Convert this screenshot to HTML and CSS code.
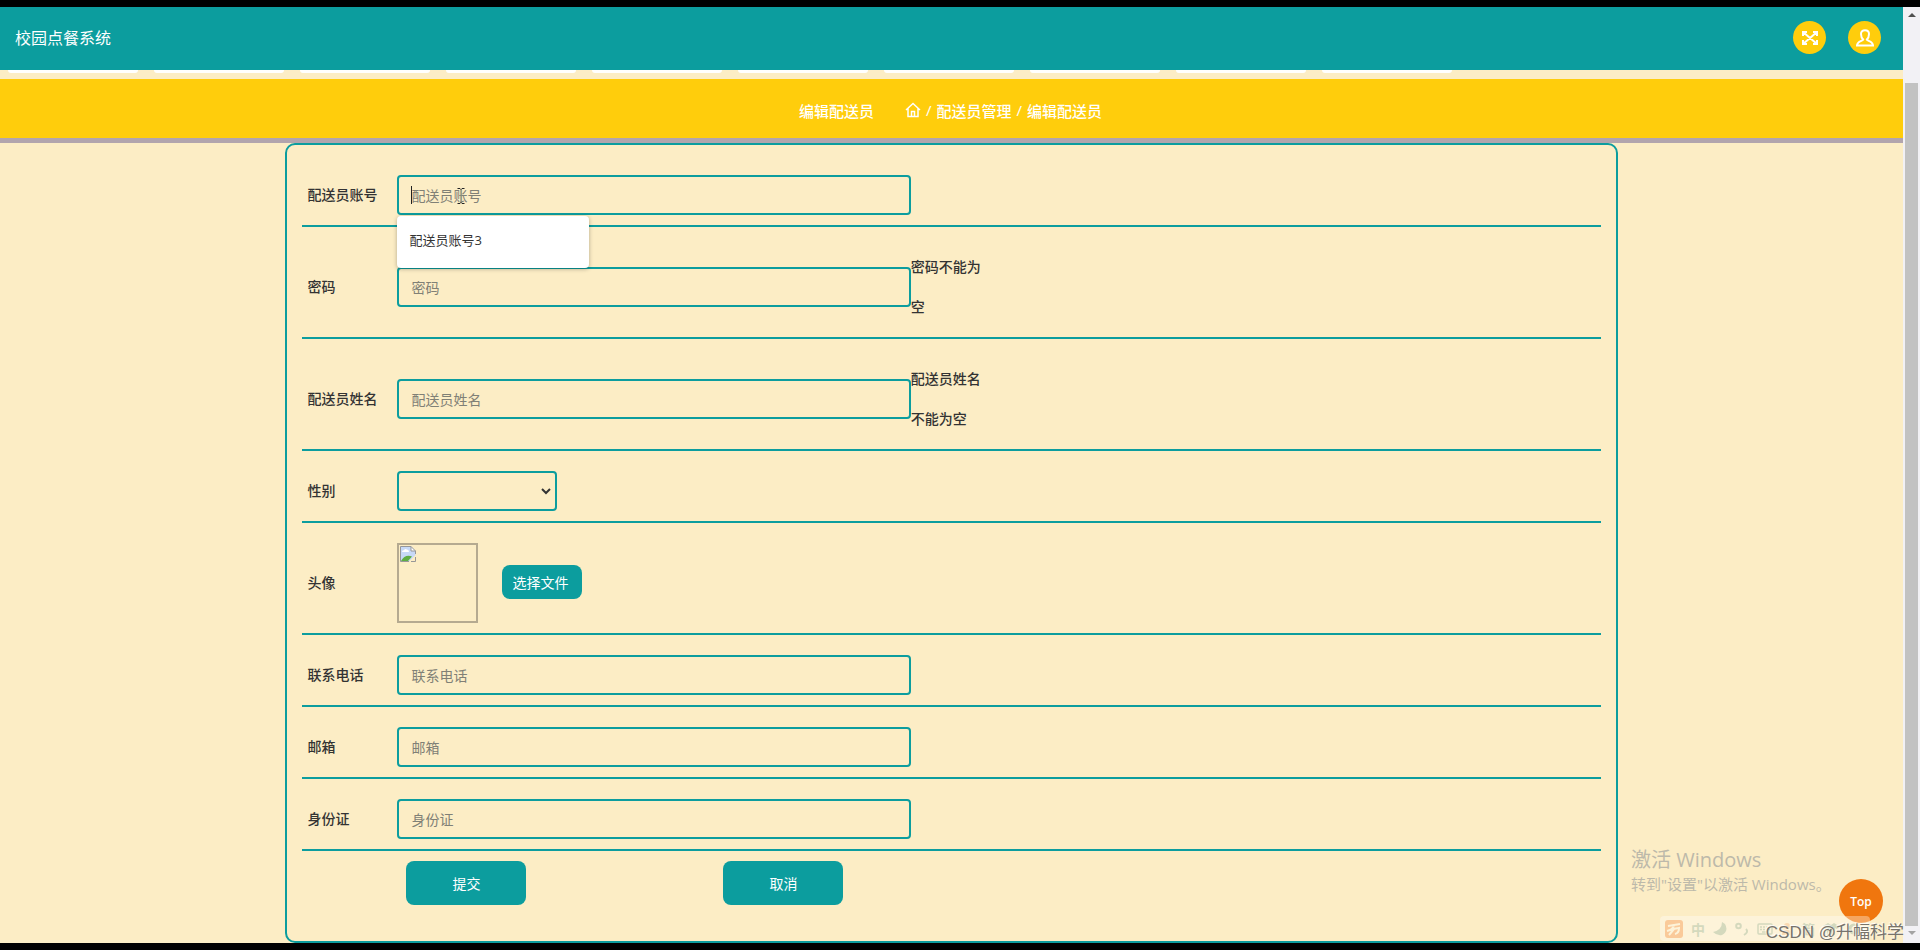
FILE: index.html
```html
<!DOCTYPE html>
<html lang="zh-CN">
<head>
    <meta charset="UTF-8">
    <meta name="viewport" content="width=device-width, initial-scale=1.0">
    <title>校园点餐系统</title>
    <link rel="stylesheet" href="styles.css">
</head>
<body>
    <div class="page">
        <header class="navbar">
            <span class="navbar-title">校园点餐系统</span>
            <div class="navbar-actions">
                <button type="button" class="round-button" aria-label="全屏">
                    <svg width="18" height="16" viewBox="0 0 18 16" fill="none" stroke="currentColor" stroke-width="2">
                        <path d="M2 6V2H6M12 2H16V6M16 10V14H12M6 14H2V10M2 2L16 14M16 2L2 14"/>
                    </svg>
                </button>
                <button type="button" class="round-button" aria-label="用户">
                    <svg width="18" height="18" viewBox="0 0 18 18" fill="none" stroke="currentColor" stroke-width="2">
                        <path d="M7.200 10.500C5.500 9 5 7 5 5C5 2.500 6.500 1.200 9 1.200S13 2.500 13 5C13 7 12.500 9 10.800 10.500C11 12 17 12 17 16.500H1C1 12 7 12 7.200 10.500Z"/>
                    </svg>
                </button>
            </div>
        </header>

        <div class="menu-tabs">
            <span></span><span></span><span></span><span></span><span></span>
            <span></span><span></span><span></span><span></span><span></span>
        </div>

        <nav class="breadcrumb">
            <span class="breadcrumb-title">编辑配送员</span>
            <a href="#" class="home-link" aria-label="首页">
                <svg width="16" height="16" viewBox="0 0 16 16" fill="none" stroke="currentColor" stroke-width="1.500">
                    <path d="M1 8L8 1.500L15 8M3 6.500V14.500H13V6.500M6.500 14.500V9.500H9.500V14.500"/>
                </svg>
            </a>
            <span>/</span>
            <span>配送员管理</span>
            <span>/</span>
            <span>编辑配送员</span>
        </nav>

        <form class="panel">
            <div class="form-row">
                <label for="account">配送员账号</label>
                <div class="field">
                    <input type="text" id="account" placeholder="配送员账号" autocomplete="off">
                    <span class="caret"></span>
                    <svg class="ibeam" width="8" height="16" viewBox="0 0 8 16" fill="none">
                        <path d="M4 1.500V14.500" stroke="#8f9a80"/>
                        <path d="M0.500 0.500H3L4 1.500L5 0.500H7.500M0.500 15.500H3L4 14.500L5 15.500H7.500" stroke="#222"/>
                    </svg>
                    <div class="suggestions">配送员账号3</div>
                </div>
            </div>
            <div class="form-row">
                <label for="password">密码</label>
                <div class="field"><input type="text" id="password" placeholder="密码"></div>
                <span class="error">密码不能为空</span>
            </div>
            <div class="form-row">
                <label for="name">配送员姓名</label>
                <div class="field"><input type="text" id="name" placeholder="配送员姓名"></div>
                <span class="error">配送员姓名不能为空</span>
            </div>
            <div class="form-row">
                <label for="gender">性别</label>
                <div class="select-wrap">
                    <select id="gender">
                        <option value=""></option>
                        <option>男</option>
                        <option>女</option>
                    </select>
                    <svg width="10" height="7" viewBox="0 0 10 7" fill="none" stroke="#333" stroke-width="2">
                        <path d="M1 1L5 5L9 1"/>
                    </svg>
                </div>
            </div>
            <div class="form-row">
                <label for="avatar">头像</label>
                <div class="avatar">
                    <svg width="16" height="16" viewBox="0 0 16 16">
                        <path d="M0.500 0.500H11L15.500 5V9L9 15.500H0.500Z" fill="#c7d9f7"/>
                        <path d="M2 6Q2 4 4 4.300Q5 2 7 3.500Q9 3.500 9 6Z" fill="#fff"/>
                        <path d="M1 15Q5 8 12 10.500L8 15Z" fill="#5fae43"/>
                        <path d="M11 0.500V5H15.500Z" fill="#fff"/>
                        <path d="M9 15.500H0.500V0.500H11L15.500 5V8M11 0.500V5H15.500M15.500 11V15.500H11" fill="none" stroke="#979797"/>
                    </svg>
                </div>
                <button type="button" id="avatar" class="upload-button">选择文件</button>
            </div>
            <div class="form-row">
                <label for="phone">联系电话</label>
                <div class="field"><input type="text" id="phone" placeholder="联系电话"></div>
            </div>
            <div class="form-row">
                <label for="email">邮箱</label>
                <div class="field"><input type="text" id="email" placeholder="邮箱"></div>
            </div>
            <div class="form-row">
                <label for="idcard">身份证</label>
                <div class="field"><input type="text" id="idcard" placeholder="身份证"></div>
            </div>
            <div class="form-actions">
                <button type="submit">提交</button>
                <button type="button">取消</button>
            </div>
        </form>
    </div>

    <div class="scrollbar">
        <span class="arrow-up"></span>
        <span class="thumb"></span>
        <span class="arrow-down"></span>
    </div>

    <div class="activate">
        <div class="activate-title">激活 Windows</div>
        <div>转到"设置"以激活 Windows。</div>
    </div>
    <button type="button" class="top-button">Top</button>
    <div class="ime-bar">
        <svg width="18" height="18" viewBox="0 0 18 18">
            <rect width="18" height="18" rx="3" fill="#f98a4b"/>
            <path d="M3 6L15 4M2 11Q7 10 9 6M8 9L14 8Q14 13 10 14M4 15L9 9" fill="none" stroke="#fff" stroke-width="2"/>
        </svg>
        <span>中</span>
        <svg width="14" height="14" viewBox="0 0 14 14">
            <path d="M9 0Q9 8 0 10Q4 14 9 13Q16 9 12 2Z" fill="#8db5b0"/>
        </svg>
        <svg width="14" height="14" viewBox="0 0 14 14" fill="none" stroke="#8db5b0" stroke-width="2">
            <circle cx="3.500" cy="4" r="2.300"/>
            <path d="M11 7Q14 10 9 13"/>
        </svg>
        <svg width="16" height="12" viewBox="0 0 16 12" fill="none" stroke="#8db5b0" stroke-width="1.500">
            <rect x="1" y="1" width="14" height="10" rx="1"/>
            <path d="M3 4H13M3 6.500H13" stroke-dasharray="2 1"/>
            <path d="M5 9H11"/>
        </svg>
        <svg width="12" height="14" viewBox="0 0 12 14" fill="#f5b58c">
            <circle cx="6" cy="4" r="3"/>
            <path d="M1 13Q1 8 6 8T11 13Z"/>
        </svg>
        <span>简</span>
        <svg width="16" height="14" viewBox="0 0 16 14" fill="#8db5b0">
            <path d="M5 1L0 4L2 7L4 6V13H12V6L14 7L16 4L11 1L8 3Z"/>
        </svg>
        <svg width="14" height="14" viewBox="0 0 14 14" fill="none" stroke="#8db5b0" stroke-width="3">
            <circle cx="7" cy="7" r="4"/>
        </svg>
    </div>
    <div class="watermark">CSDN @升幅科学</div>
</body>
</html>
```

FILE: styles.css
```css
* {
    box-sizing: border-box;
}

body {
    position: relative;
    margin: 0;
    min-height: 100vh;
    border: solid #000;
    border-width: 7px 0;
    display: flex;
    background-color: #fcedc5;
    color: #333;
    font-family: "Open Sans", "Noto Sans CJK SC", sans-serif;
    font-size: 14px;
    overflow: hidden;
}

button,
input,
select {
    font-family: inherit;
    font-size: 14px;
}

button {
    padding: 0;
    border: none;
    color: #fff;
    cursor: pointer;
}

.page {
    flex: 1;
    min-width: 0;
}

.navbar {
    height: 63px;
    padding: 0 22px 2px 15px;
    display: flex;
    justify-content: space-between;
    align-items: center;
    background-color: #0c9d9e;
    color: #fff;
}

.navbar-title {
    font-size: 16px;
    line-height: 24px;
}

.navbar-actions {
    display: flex;
    gap: 22px;
}

.round-button {
    width: 33px;
    height: 33px;
    border-radius: 50%;
    display: flex;
    align-items: center;
    justify-content: center;
    background-color: #ffcd0c;
}

/* Lower edge of the horizontal menu */
.menu-tabs {
    height: 9px;
    padding-left: 8px;
    display: flex;
    gap: 16px;
    overflow: hidden;
}

.menu-tabs span {
    width: 130px;
    height: 3px;
    background-color: #fff;
    border-radius: 0 0 3px 3px;
}

.breadcrumb {
    height: 64px;
    padding-top: 3px;
    padding-right: 2px;
    border-bottom: 5px solid #b2a5ad;
    display: flex;
    justify-content: center;
    align-items: center;
    gap: 5px;
    background-color: #ffcd0c;
    color: #fff;
    font-size: 15px;
    font-weight: 500;
}

.breadcrumb-title {
    margin-right: 26px;
}

.home-link {
    display: flex;
    color: #fff;
}

.panel {
    width: 70%;
    margin: 0 auto;
    padding: 10px 15px 36px;
    border: 2px solid #0c9d9e;
    border-radius: 10px;
}

.form-row {
    display: flex;
    align-items: center;
    padding: 20px 10px 10px 5px;
    border-bottom: 2px solid #0c9d9e;
}

.form-row label {
    width: 90px;
    padding-bottom: 2px;
    font-weight: 500;
}

.field {
    position: relative;
    width: 40%;
}

.field input,
.select-wrap select {
    display: block;
    width: 100%;
    height: 40px;
    padding: 0 12px;
    border: 2px solid #0c9d9e;
    border-radius: 4px;
    outline: none;
    background-color: transparent;
    color: #333;
}

.field input::placeholder {
    color: #808076;
}

.caret {
    position: absolute;
    left: 14px;
    top: 11px;
    width: 1px;
    height: 18px;
    background-color: #222;
}

.ibeam {
    position: absolute;
    left: 60px;
    top: 13px;
}

.suggestions {
    position: absolute;
    z-index: 10;
    left: 0;
    top: 41px;
    width: 192px;
    height: 52px;
    padding-left: 12px;
    border-radius: 4px;
    background-color: #fff;
    box-shadow: 0 1px 4px rgba(0, 0, 0, 0.3);
    font-size: 13px;
    line-height: 48px;
}

.error {
    width: 72px;
    font-weight: 500;
    line-height: 40px;
}

.select-wrap {
    position: relative;
    width: 160px;
}

.select-wrap select {
    appearance: none;
}

.select-wrap svg {
    position: absolute;
    right: 6px;
    top: 17px;
    pointer-events: none;
}

.avatar {
    width: 81px;
    height: 80px;
    margin-right: 24px;
    padding: 1px;
    border: 2px solid #b5aa90;
}

.avatar svg {
    display: block;
}

.upload-button {
    width: 80px;
    height: 34px;
    margin-bottom: 2px;
    padding: 0 14px 0 10px;
    border-radius: 8px;
    background-color: #0c9d9e;
}

.form-actions {
    display: flex;
    gap: 197px;
    padding: 10px 0 0 104px;
}

.form-actions button {
    width: 120px;
    height: 44px;
    border-radius: 8px;
    background-color: #0c9d9e;
}

.scrollbar {
    width: 17px;
    padding: 6px 2px 8px;
    display: flex;
    flex-direction: column;
    align-items: center;
    background-color: #f2f1f5;
}

.scrollbar .thumb {
    width: 13px;
    margin: 66px 0 5px;
    flex: 1;
    background-color: #c2c2c2;
}

.arrow-up,
.arrow-down {
    border: 4px solid transparent;
}

.arrow-up {
    border-top-width: 0;
    border-bottom-color: #505050;
}

.arrow-down {
    border-bottom-width: 0;
    border-top-color: #a3a3a3;
}

/* Desktop overlays */
.activate {
    position: absolute;
    right: 92px;
    bottom: 49px;
    width: 197px;
    color: #bdb9aa;
    font-size: 15px;
    line-height: 20px;
    white-space: nowrap;
}

.activate-title {
    font-size: 20px;
    line-height: 28px;
}

.top-button {
    position: absolute;
    right: 37px;
    bottom: 20px;
    width: 44px;
    height: 44px;
    border-radius: 50%;
    background-color: #f0760e;
    font-size: 12px;
    font-weight: 600;
}

.ime-bar {
    position: absolute;
    right: 50px;
    bottom: 2px;
    width: 210px;
    height: 25px;
    padding: 0 5px;
    display: flex;
    align-items: center;
    gap: 8px;
    border-radius: 4px;
    background-color: #fff;
    color: #8db5b0;
    font-weight: 700;
    opacity: 0.35;
}

.watermark {
    position: absolute;
    right: 16px;
    bottom: -2px;
    color: #77736c;
    font-family: "Liberation Sans", "Noto Sans CJK SC", sans-serif;
    font-size: 17px;
    line-height: 24px;
    text-shadow: -1px -1px 1px #fff;
    white-space: nowrap;
}
```
